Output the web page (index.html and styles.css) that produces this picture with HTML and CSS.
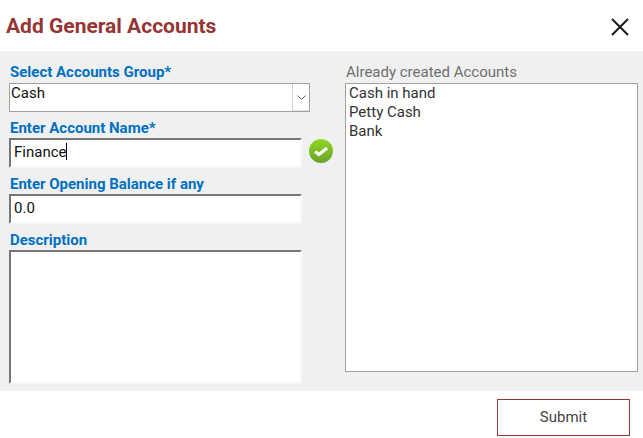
FILE: index.html
```html
<!DOCTYPE html>
<html lang="en">
<head>
  <meta charset="UTF-8">
  <meta name="viewport" content="width=device-width, initial-scale=1.0">
  <title>Add General Accounts</title>
  <link rel="stylesheet" href="styles.css">
</head>
<body>

  <div class="header">
    <h1>Add General Accounts</h1>
    <svg class="close-icon" width="18" height="18" viewBox="0 0 18 18">
      <path d="M1 1L17 17M17 1L1 17" stroke="#1a1a1a" stroke-width="2" fill="none"/>
    </svg>
  </div>

  <div class="form-content">
    <div class="left-section">
      <label class="field-label">Select Accounts Group*</label>
      <div class="select-box">
        <span class="select-value">Cash</span>
        <span class="select-arrow">
          <svg width="9" height="5" viewBox="0 0 9 5">
            <path d="M0.5 0.5L4.5 4.5L8.5 0.5" stroke="#555" stroke-width="1" fill="none"/>
          </svg>
        </span>
      </div>

      <label class="field-label">Enter Account Name*</label>
      <div class="name-row">
        <div class="text-box">Finance<span class="caret"></span></div>
        <svg class="ok-icon" width="24" height="24" viewBox="0 0 24 24">
          <defs>
            <linearGradient id="ok-fill" x1="0" y1="0" x2="0" y2="1">
              <stop offset="0" stop-color="#8fd81f"/>
              <stop offset="1" stop-color="#68a32c"/>
            </linearGradient>
          </defs>
          <circle cx="12" cy="12" r="12" fill="url(#ok-fill)"/>
          <path d="M6 12.5L10 15.5L18 9" stroke="#fff" stroke-width="3.2" fill="none"/>
        </svg>
      </div>

      <label class="field-label">Enter Opening Balance if any</label>
      <div class="text-box">0.0</div>

      <label class="field-label">Description</label>
      <div class="text-box desc-box"></div>
    </div>

    <div class="right-section">
      <div class="list-title">Already created Accounts</div>
      <ul class="account-list">
        <li>Cash in hand</li>
        <li>Petty Cash</li>
        <li>Bank</li>
      </ul>
    </div>
  </div>

  <div class="footer">
    <button class="button-submit" type="button">Submit</button>
  </div>

</body>
</html>
```

FILE: styles.css
```css
* {
  box-sizing: border-box;
  margin: 0;
  padding: 0;
  font-family: 'Roboto', sans-serif;
}

html, body {
  overflow: hidden;
}

body {
  background-color: #fff;
  height: 100vh;
}

.header {
  height: 51px;
  display: flex;
  justify-content: space-between;
  align-items: center;
  padding: 0 14px 0 6px;
}

.header h1 {
  font-size: 21px;
  font-weight: 700;
  color: #943634;
}

.close-icon {
  margin-top: 2px;
}

.form-content {
  height: 340px;
  display: flex;
  gap: 11px;
  background-color: #f0f0f0;
  padding: 12px 5px 0 9px;
}

.left-section {
  width: 325px;
  display: flex;
  flex-direction: column;
}

.field-label {
  display: flex;
  align-items: flex-end;
  height: 26px;
  padding: 0 0 1px 1px;
  font-size: 15px;
  font-weight: 700;
  color: #0070c0;
}

.field-label:first-child {
  height: 20px;
  padding-bottom: 2px;
}

.select-box {
  width: 301px;
  height: 29px;
  display: flex;
  justify-content: space-between;
  background-color: #fff;
  border: 1px solid #a0a0a0;
}

.select-value {
  padding-left: 1px;
  font-size: 15px;
  line-height: 18px;
  color: #111;
}

.select-arrow {
  width: 17px;
  display: flex;
  align-items: center;
  justify-content: center;
  border-left: 1px solid #d0d0d0;
  border-bottom: 1px solid #e4e4e4;
}

.name-row {
  display: flex;
  gap: 7px;
}

.text-box {
  width: 293px;
  height: 30px;
  display: flex;
  align-items: center;
  background-color: #fff;
  border-style: solid;
  border-width: 2px;
  border-color: #767676 #f7f7f7 #f7f7f7 #767676;
  padding: 0 0 3px 3px;
  font-size: 15px;
  color: #111;
}

.caret {
  width: 1px;
  height: 17px;
  background-color: #000;
}

.ok-icon {
  flex-shrink: 0;
  margin-top: 1px;
}

.desc-box {
  height: 134px;
}

.right-section {
  width: 293px;
  display: flex;
  flex-direction: column;
}

.list-title {
  height: 20px;
  padding-left: 1px;
  font-size: 15px;
  color: #6f6f6f;
}

.account-list {
  height: 289px;
  list-style: none;
  background-color: #fff;
  border: 1px solid #a0a0a0;
  padding-left: 3px;
}

.account-list li {
  font-size: 15px;
  line-height: 19px;
  color: #333;
}

.footer {
  display: flex;
  justify-content: flex-end;
  padding: 8px 13px 0 0;
}

.button-submit {
  width: 133px;
  height: 37px;
  padding-bottom: 2px;
  background-color: #fff;
  border: 1px solid #943634;
  font-size: 15px;
  color: #444;
}
```
